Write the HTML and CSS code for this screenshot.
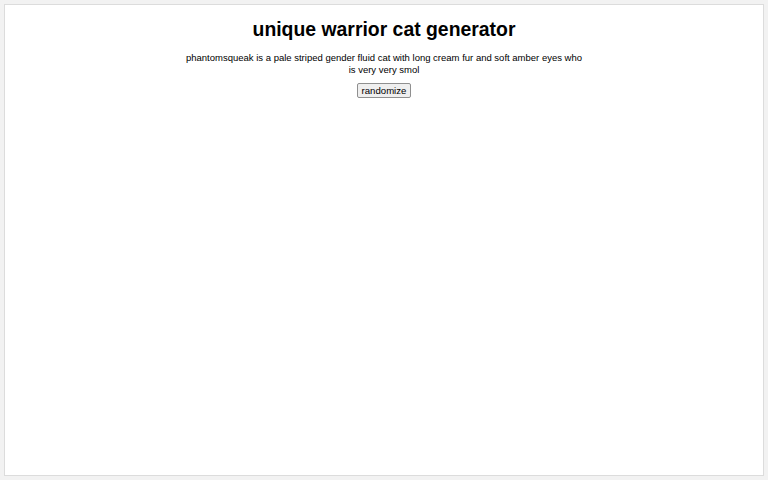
FILE: index.html
```html
<!DOCTYPE html>
<html lang="en">
<head>
  <meta charset="UTF-8" />
  <meta name="viewport" content="width=device-width, initial-scale=1.0"/>
  <title>unique warrior cat generator</title>
  <link rel="stylesheet" href="styles.css">
</head>
<body>

  <div class="page">
    <h1>unique warrior cat generator</h1>
    <p id="gato">phantomsqueak is a pale striped gender fluid cat with long cream fur and soft amber eyes who is very very smol</p>
    <button onclick="randomize()">randomize</button>
  </div>

  <script>
    function randomize() {
      // TODO: pick new parts
    }
  </script>

</body>
</html>
```

FILE: styles.css
```css
body {
  font-family: "Liberation Sans", Arial, sans-serif;
  background-color: #f2f2f2;
  margin: 0;
  padding: 4px;
}

.page {
  background-color: #ffffff;
  border: 1px solid #dcdcdc;
  height: 472px;
  box-sizing: border-box;
  text-align: center;
  padding-top: 13px;
}

h1 {
  font-size: 19.4px;
  margin: 0 0 11px 0;
}

#gato {
  font-size: 9.5px;
  line-height: 11.6px;
  max-width: 404px;
  margin: 0 auto 5px auto;
}

button {
  font-family: "Liberation Sans", Arial, sans-serif;
  font-size: 9.6px;
  padding: 1px 4px;
  background-color: #efefef;
  border: 1px solid #8f8f8f;
  border-radius: 2px;
}
```
